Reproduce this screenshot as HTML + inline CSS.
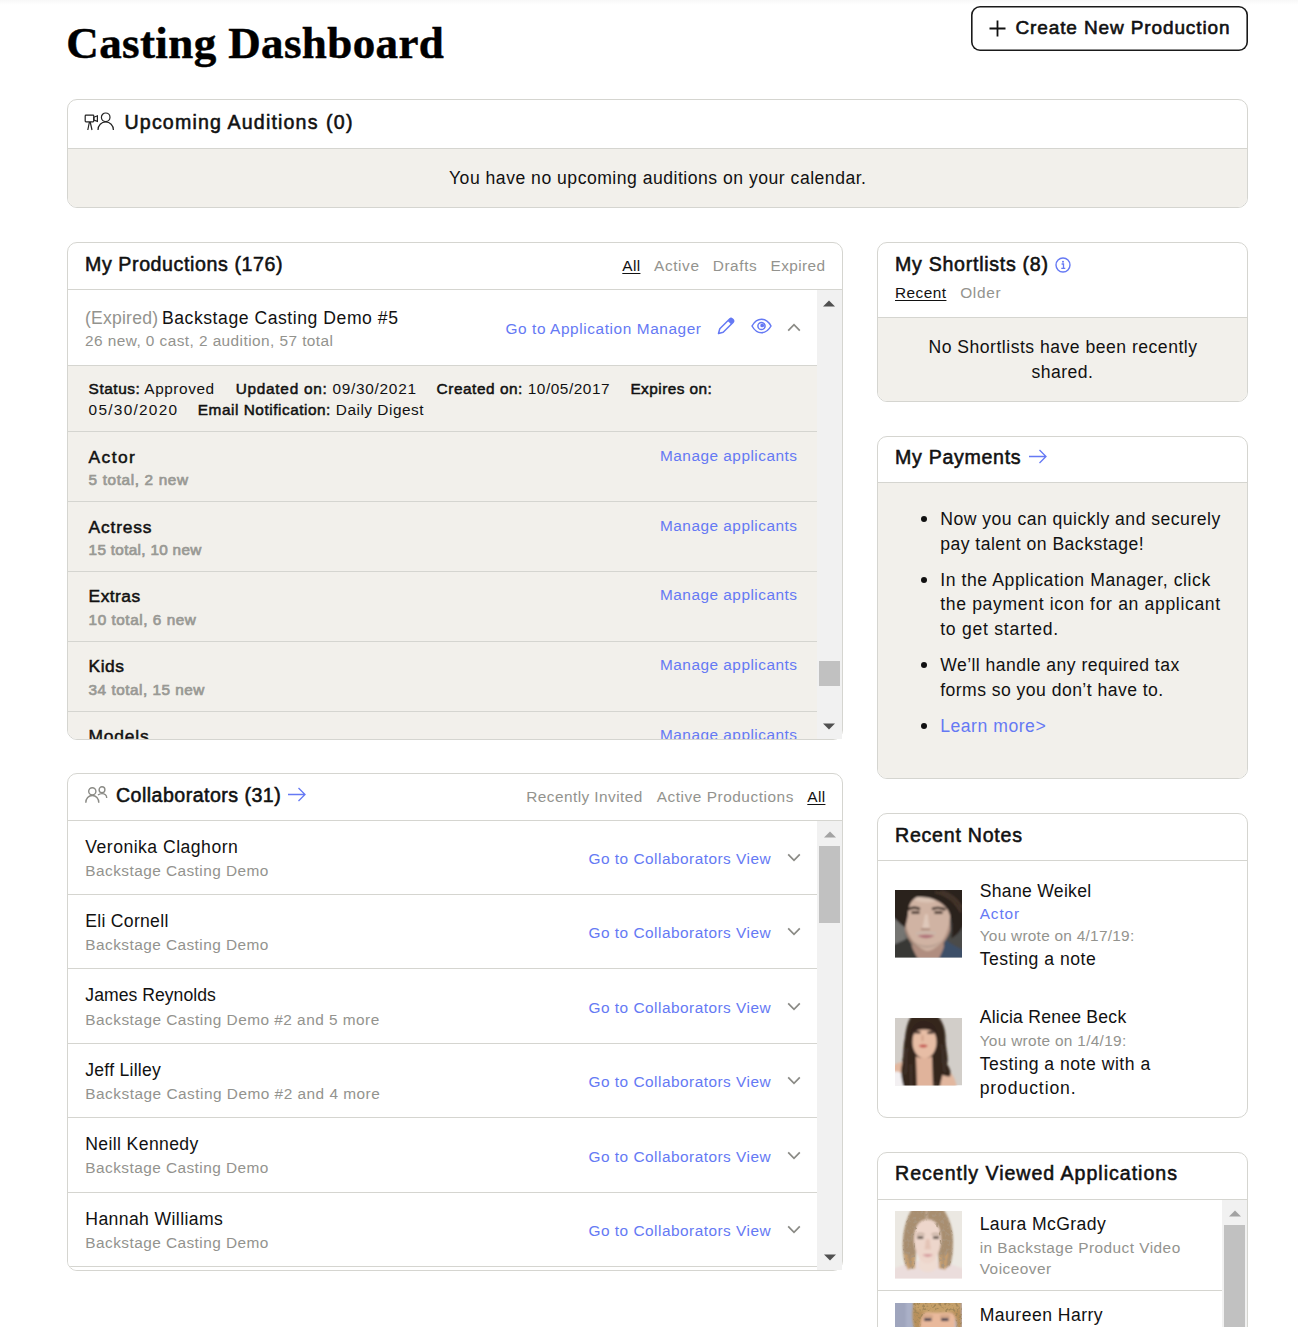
<!DOCTYPE html>
<html lang="en"><head><meta charset="utf-8"><title>Casting Dashboard</title>
<style>
*{box-sizing:border-box}
html,body{margin:0;padding:0;background:#fff}
body{width:1298px;height:1327px;overflow:hidden;position:relative;font-family:"Liberation Sans",sans-serif;color:#111111}
.b{position:absolute}
.t{position:absolute;white-space:nowrap;line-height:1}
.i{position:absolute;display:block;overflow:visible}
.strip{background:linear-gradient(#f8f8f8,#fff)}
.card{border:1px solid #d5d5d0;border-radius:10px;background:#fff}
.btn{box-shadow:inset 0 0 0 1.6px #1a1a1a;border-radius:9px;background:#fff}
.bd{background:#f2f0eb}
.ln{background:#d5d5d0}
.sb{background:#f1f1f1}
.thumb{background:#c1c1c1}
.dot{position:absolute;width:6px;height:6px;border-radius:50%;background:#111}
b{font-weight:400;-webkit-text-stroke:0.5px}
</style></head>
<body>
<div class="b root" style="left:0.00px;top:0.00px;width:1298.00px;height:1327.00px;"><div class="b strip" style="left:0.00px;top:0.00px;width:1298.00px;height:5.00px;"></div>
<span class="t" style="left:66.30px;top:21.01px;font-size:45px;color:#000;font-weight:700;font-family:'Liberation Serif',serif;letter-spacing:0.385px;-webkit-text-stroke:0.5px;">Casting Dashboard</span><div class="b btn" style="left:971.00px;top:6.00px;width:277.00px;height:45.40px;"><svg class="i" style="left:18.00px;top:13.50px" width="17" height="17" viewBox="0 0 17 17" ><path d="M8.5 0.5v16M0.5 8.5h16" stroke="#111" stroke-width="1.8" fill="none"/></svg><span class="t" style="left:44.50px;top:12.00px;font-size:19px;color:#111111;letter-spacing:0.878px;-webkit-text-stroke:0.6px;">Create New Production</span></div>
<div class="b card" style="left:67.00px;top:99.00px;width:1181.00px;height:109.00px;"><div class="b hd" style="left:0.00px;top:0.00px;width:1179.00px;height:48.00px;"></div>
<div class="b bd" style="left:0.00px;top:48.00px;width:1179.00px;height:59.00px;border-top:1px solid #d5d5d0;border-radius:0 0 9px 9px;"></div>
<svg class="i" style="left:16.00px;top:12.00px" width="31" height="19" viewBox="0 0 31 19" ><g fill="none" stroke="#222" stroke-width="1.2">
<rect x="1.2" y="3.2" width="8.6" height="6.6" rx="0.8"/><path d="M9.8 5.2l3.6-1.4v5.6l-3.6-1.4z"/><path d="M5.400 10l-1.600 8M6.200 10l1.800 8"/>
<circle cx="21.7" cy="5.3" r="4.3"/><path d="M14 18c0-4.6 3.4-8 7.7-8s7.7 3.400 7.700 8"/></g></svg><span class="t" style="left:56.50px;top:13.00px;font-size:19.6px;color:#111111;letter-spacing:1.165px;-webkit-text-stroke:0.55px;">Upcoming Auditions</span><span class="t" style="left:258.00px;top:13.00px;font-size:19.6px;color:#111111;letter-spacing:1.273px;-webkit-text-stroke:0.55px;">(0)</span><span class="t" style="left:381.00px;top:70.00px;font-size:17.6px;color:#111111;letter-spacing:0.499px;">You have no upcoming auditions on your calendar.</span></div>
<div class="b card" style="left:67.00px;top:242.00px;width:776.00px;height:498.00px;"><span class="t" style="left:17.00px;top:12.00px;font-size:19.6px;color:#111111;letter-spacing:0.594px;-webkit-text-stroke:0.55px;">My Productions (176)</span><span class="t" style="left:554.30px;top:15.01px;font-size:15.4px;color:#111111;letter-spacing:0.345px;text-decoration:underline;text-underline-offset:1.5px;text-decoration-thickness:1px;">All</span><span class="t" style="left:586.00px;top:15.01px;font-size:15.4px;color:#93938e;letter-spacing:0.616px;">Active</span><span class="t" style="left:644.70px;top:15.01px;font-size:15.4px;color:#93938e;letter-spacing:0.591px;">Drafts</span><span class="t" style="left:702.60px;top:15.01px;font-size:15.4px;color:#93938e;letter-spacing:0.385px;">Expired</span><div class="b ln" style="left:0.00px;top:46.00px;width:774.00px;height:1.00px;"></div>
<div class="b scroll" style="left:0.00px;top:47.00px;width:749.00px;height:449.00px;overflow:hidden;border-radius:0 0 0 9px;background:#f2f0eb;"><div class="b row" style="left:0.00px;top:0.00px;width:749.00px;height:75.00px;background:#fff;"><span class="t" style="left:17.00px;top:20.01px;font-size:17.6px;color:#93938e;letter-spacing:0.203px;">(Expired)</span><span class="t" style="left:94.00px;top:20.01px;font-size:17.6px;color:#111111;letter-spacing:0.542px;">Backstage Casting Demo #5</span><span class="t" style="left:17.00px;top:43.00px;font-size:15.4px;color:#93938e;letter-spacing:0.436px;">26 new, 0 cast, 2 audition, 57 total</span><span class="t" style="left:437.50px;top:31.00px;font-size:15.4px;color:#6579f4;letter-spacing:0.588px;">Go to Application Manager</span><svg class="i" style="left:649.00px;top:27.00px" width="19" height="18" viewBox="0 0 19 18" ><g fill="none" stroke="#6579f4" stroke-width="1.5" stroke-linejoin="round"><path d="M1.500 16.500l1.300-4.700L12.600 2a2 2 0 0 1 2.800 0l.6.600a2 2 0 0 1 0 2.800L6.200 15.200z"/></g><path d="M10.700 3.900l1.900-1.900a2 2 0 0 1 2.800 0l.6.600a2 2 0 0 1 0 2.800l-1.900 1.900z" fill="#6579f4"/></svg><svg class="i" style="left:683.00px;top:28.00px" width="21" height="16" viewBox="0 0 21 16" ><g fill="none" stroke="#6579f4" stroke-width="1.5"><path d="M1 8C3.500 3.500 7 1.300 10.500 1.300S17.500 3.500 20 8c-2.500 4.500-6 6.700-9.500 6.700S3.500 12.500 1 8z"/><circle cx="10.500" cy="8" r="3.600"/></g><circle cx="11.200" cy="7.400" r="1.900" fill="#6579f4"/></svg><svg class="i" style="left:719.00px;top:32.00px" width="14" height="10" viewBox="0 0 14 10" ><path d="M1.200 8.600L7 2.600l5.800 6" fill="none" stroke="#8a8a85" stroke-width="1.7"/></svg></div>
<div class="b ln" style="left:0.00px;top:75.00px;width:749.00px;height:1.00px;"></div>
<span class="t" style="left:20.60px;top:91.01px;font-size:15.4px;color:#111111;letter-spacing:0.551px;"><b>Status:</b> Approved</span><span class="t" style="left:167.70px;top:91.01px;font-size:15.4px;color:#111111;letter-spacing:0.720px;"><b>Updated on:</b> 09/30/2021</span><span class="t" style="left:368.60px;top:91.01px;font-size:15.4px;color:#111111;letter-spacing:0.536px;"><b>Created on:</b> 10/05/2017</span><span class="t" style="left:562.40px;top:91.01px;font-size:15.4px;color:#111111;letter-spacing:0.450px;"><b>Expires on:</b></span><span class="t" style="left:20.60px;top:112.01px;font-size:15.4px;color:#111111;letter-spacing:1.274px;">05/30/2020</span><span class="t" style="left:129.80px;top:112.01px;font-size:15.4px;color:#111111;letter-spacing:0.524px;"><b>Email Notification:</b> Daily Digest</span><div class="b ln" style="left:0.00px;top:141.00px;width:749.00px;height:1.00px;"></div>
<span class="t" style="left:20.60px;top:159.01px;font-size:17.4px;color:#111111;letter-spacing:1.427px;-webkit-text-stroke:0.5px;">Actor</span><span class="t" style="left:20.60px;top:182.00px;font-size:15.3px;color:#999994;letter-spacing:0.646px;-webkit-text-stroke:0.7px;">5 total, 2 new</span><span class="t" style="left:592.00px;top:158.01px;font-size:15.4px;color:#6579f4;letter-spacing:0.487px;">Manage applicants</span><div class="b ln" style="left:0.00px;top:211.00px;width:749.00px;height:1.00px;"></div>
<span class="t" style="left:20.60px;top:229.01px;font-size:17.4px;color:#111111;letter-spacing:0.803px;-webkit-text-stroke:0.5px;">Actress</span><span class="t" style="left:20.60px;top:252.00px;font-size:15.3px;color:#999994;letter-spacing:0.312px;-webkit-text-stroke:0.7px;">15 total, 10 new</span><span class="t" style="left:592.00px;top:228.01px;font-size:15.4px;color:#6579f4;letter-spacing:0.487px;">Manage applicants</span><div class="b ln" style="left:0.00px;top:281.00px;width:749.00px;height:1.00px;"></div>
<span class="t" style="left:20.60px;top:298.01px;font-size:17.4px;color:#111111;letter-spacing:0.441px;-webkit-text-stroke:0.5px;">Extras</span><span class="t" style="left:20.60px;top:322.00px;font-size:15.3px;color:#999994;letter-spacing:0.550px;-webkit-text-stroke:0.7px;">10 total, 6 new</span><span class="t" style="left:592.00px;top:297.01px;font-size:15.4px;color:#6579f4;letter-spacing:0.487px;">Manage applicants</span><div class="b ln" style="left:0.00px;top:351.00px;width:749.00px;height:1.00px;"></div>
<span class="t" style="left:20.60px;top:368.01px;font-size:17.4px;color:#111111;letter-spacing:0.485px;-webkit-text-stroke:0.5px;">Kids</span><span class="t" style="left:20.60px;top:392.00px;font-size:15.3px;color:#999994;letter-spacing:0.519px;-webkit-text-stroke:0.7px;">34 total, 15 new</span><span class="t" style="left:592.00px;top:367.01px;font-size:15.4px;color:#6579f4;letter-spacing:0.487px;">Manage applicants</span><div class="b ln" style="left:0.00px;top:421.00px;width:749.00px;height:1.00px;"></div>
<span class="t" style="left:20.60px;top:438.01px;font-size:17.4px;color:#111111;letter-spacing:0.787px;-webkit-text-stroke:0.5px;">Models</span><span class="t" style="left:20.60px;top:462.00px;font-size:15.3px;color:#999994;letter-spacing:0.393px;-webkit-text-stroke:0.7px;">12 total, 3 new</span><span class="t" style="left:592.00px;top:437.01px;font-size:15.4px;color:#6579f4;letter-spacing:0.487px;">Manage applicants</span></div>
<div class="b sb" style="left:749.00px;top:47.00px;width:25.00px;height:449.00px;"><svg class="i" style="left:6.20px;top:9.50px" width="12" height="7" viewBox="0 0 12 7" ><path d="M0 6.500L6 0.500l6 6z" fill="#505050"/></svg><div class="b thumb" style="left:2.00px;top:371.00px;width:21.00px;height:25.00px;"></div>
<svg class="i" style="left:6.20px;top:432.50px" width="12" height="7" viewBox="0 0 12 7" ><path d="M0 0.500L6 6.500l6-6z" fill="#505050"/></svg></div>
</div>
<div class="b card" style="left:67.00px;top:773.00px;width:776.00px;height:498.00px;"><svg class="i" style="left:17.00px;top:11.50px" width="23" height="18" viewBox="0 0 23 18" ><g fill="none" stroke="#8a8a85" stroke-width="1.4"><circle cx="7.300" cy="5.300" r="3.600"/><path d="M0.800 16.800c0-4.200 2.800-7.300 6.500-7.300s6.500 3.100 6.500 7.300"/><circle cx="17" cy="3.700" r="2.900"/><path d="M13 9c1.100-.900 2.400-1.400 4-1.400 2.700 0 4.700 1.800 4.700 4.300"/></g></svg><span class="t" style="left:48.00px;top:12.00px;font-size:19.6px;color:#111111;letter-spacing:0.463px;-webkit-text-stroke:0.55px;">Collaborators (31)</span><svg class="i" style="left:219.00px;top:13.00px" width="20" height="15" viewBox="0 0 20 15" ><path d="M1 7.500h17M11.500 1l6.500 6.500-6.500 6.500" fill="none" stroke="#6579f4" stroke-width="1.3"/></svg><span class="t" style="left:458.30px;top:15.01px;font-size:15.4px;color:#93938e;letter-spacing:0.432px;">Recently Invited</span><span class="t" style="left:588.70px;top:15.01px;font-size:15.4px;color:#93938e;letter-spacing:0.543px;">Active Productions</span><span class="t" style="left:739.30px;top:15.01px;font-size:15.4px;color:#111111;letter-spacing:0.345px;text-decoration:underline;text-underline-offset:1.5px;text-decoration-thickness:1px;">All</span><div class="b ln" style="left:0.00px;top:46.00px;width:774.00px;height:1.00px;"></div>
<div class="b scroll" style="left:0.00px;top:47.00px;width:749.00px;height:449.00px;overflow:hidden;border-radius:0 0 0 9px;background:#fff;"><span class="t" style="left:17.30px;top:18.01px;font-size:17.6px;color:#111111;letter-spacing:0.483px;">Veronika Claghorn</span><span class="t" style="left:17.30px;top:42.01px;font-size:15.4px;color:#93938e;letter-spacing:0.445px;">Backstage Casting Demo</span><span class="t" style="left:520.60px;top:30.01px;font-size:15.4px;color:#6579f4;letter-spacing:0.486px;">Go to Collaborators View</span><svg class="i" style="left:719.00px;top:32.00px" width="14" height="10" viewBox="0 0 14 10" ><path d="M1.200 1.400L7 7.400l5.800-6" fill="none" stroke="#8a8a85" stroke-width="1.700"/></svg><div class="b ln" style="left:0.00px;top:73.00px;width:749.00px;height:1.00px;"></div>
<span class="t" style="left:17.30px;top:92.01px;font-size:17.6px;color:#111111;letter-spacing:0.281px;">Eli Cornell</span><span class="t" style="left:17.30px;top:116.01px;font-size:15.4px;color:#93938e;letter-spacing:0.445px;">Backstage Casting Demo</span><span class="t" style="left:520.60px;top:104.00px;font-size:15.4px;color:#6579f4;letter-spacing:0.486px;">Go to Collaborators View</span><svg class="i" style="left:719.00px;top:106.40px" width="14" height="10" viewBox="0 0 14 10" ><path d="M1.200 1.400L7 7.400l5.800-6" fill="none" stroke="#8a8a85" stroke-width="1.700"/></svg><div class="b ln" style="left:0.00px;top:147.00px;width:749.00px;height:1.00px;"></div>
<span class="t" style="left:17.30px;top:166.00px;font-size:17.6px;color:#111111;letter-spacing:0.034px;">James Reynolds</span><span class="t" style="left:17.30px;top:191.02px;font-size:15.4px;color:#93938e;letter-spacing:0.480px;">Backstage Casting Demo #2 and 5 more</span><span class="t" style="left:520.60px;top:179.01px;font-size:15.4px;color:#6579f4;letter-spacing:0.486px;">Go to Collaborators View</span><svg class="i" style="left:719.00px;top:180.80px" width="14" height="10" viewBox="0 0 14 10" ><path d="M1.200 1.400L7 7.400l5.800-6" fill="none" stroke="#8a8a85" stroke-width="1.700"/></svg><div class="b ln" style="left:0.00px;top:222.00px;width:749.00px;height:1.00px;"></div>
<span class="t" style="left:17.30px;top:241.01px;font-size:17.6px;color:#111111;letter-spacing:0.247px;">Jeff Lilley</span><span class="t" style="left:17.30px;top:265.01px;font-size:15.4px;color:#93938e;letter-spacing:0.495px;">Backstage Casting Demo #2 and 4 more</span><span class="t" style="left:520.60px;top:253.01px;font-size:15.4px;color:#6579f4;letter-spacing:0.486px;">Go to Collaborators View</span><svg class="i" style="left:719.00px;top:255.20px" width="14" height="10" viewBox="0 0 14 10" ><path d="M1.200 1.400L7 7.400l5.800-6" fill="none" stroke="#8a8a85" stroke-width="1.700"/></svg><div class="b ln" style="left:0.00px;top:296.00px;width:749.00px;height:1.00px;"></div>
<span class="t" style="left:17.30px;top:315.00px;font-size:17.6px;color:#111111;letter-spacing:0.370px;">Neill Kennedy</span><span class="t" style="left:17.30px;top:339.00px;font-size:15.4px;color:#93938e;letter-spacing:0.445px;">Backstage Casting Demo</span><span class="t" style="left:520.60px;top:328.02px;font-size:15.4px;color:#6579f4;letter-spacing:0.486px;">Go to Collaborators View</span><svg class="i" style="left:719.00px;top:329.60px" width="14" height="10" viewBox="0 0 14 10" ><path d="M1.200 1.400L7 7.400l5.800-6" fill="none" stroke="#8a8a85" stroke-width="1.700"/></svg><div class="b ln" style="left:0.00px;top:371.00px;width:749.00px;height:1.00px;"></div>
<span class="t" style="left:17.30px;top:390.01px;font-size:17.6px;color:#111111;letter-spacing:0.393px;">Hannah Williams</span><span class="t" style="left:17.30px;top:414.01px;font-size:15.4px;color:#93938e;letter-spacing:0.445px;">Backstage Casting Demo</span><span class="t" style="left:520.60px;top:402.01px;font-size:15.4px;color:#6579f4;letter-spacing:0.486px;">Go to Collaborators View</span><svg class="i" style="left:719.00px;top:404.00px" width="14" height="10" viewBox="0 0 14 10" ><path d="M1.200 1.400L7 7.400l5.800-6" fill="none" stroke="#8a8a85" stroke-width="1.700"/></svg><div class="b ln" style="left:0.00px;top:445.00px;width:749.00px;height:1.00px;"></div>
</div>
<div class="b sb" style="left:749.00px;top:47.00px;width:25.00px;height:449.00px;"><svg class="i" style="left:6.50px;top:9.50px" width="12" height="7" viewBox="0 0 12 7" ><path d="M0 6.500L6 0.500l6 6z" fill="#a3a3a3"/></svg><div class="b thumb" style="left:2.00px;top:25.00px;width:21.00px;height:77.00px;"></div>
<svg class="i" style="left:6.50px;top:432.50px" width="12" height="7" viewBox="0 0 12 7" ><path d="M0 0.500L6 6.500l6-6z" fill="#505050"/></svg></div>
</div>
<div class="b card" style="left:877.00px;top:242.00px;width:371.00px;height:160.00px;"><span class="t" style="left:17.00px;top:12.00px;font-size:19.6px;color:#111111;letter-spacing:0.717px;-webkit-text-stroke:0.55px;">My Shortlists (8)</span><svg class="i" style="left:176.60px;top:14.40px" width="16" height="16" viewBox="0 0 16 16" ><circle cx="8" cy="8" r="7" fill="none" stroke="#6579f4" stroke-width="1.400"/><path d="M6.600 7h1.900v4.200M6.300 11.300h4" stroke="#6579f4" stroke-width="1.300" fill="none"/><circle cx="8" cy="4.700" r="1" fill="#6579f4"/></svg><span class="t" style="left:17.00px;top:42.01px;font-size:15.4px;color:#111111;letter-spacing:0.447px;text-decoration:underline;text-underline-offset:1.5px;text-decoration-thickness:1px;">Recent</span><span class="t" style="left:82.20px;top:42.01px;font-size:15.4px;color:#93938e;letter-spacing:0.715px;">Older</span><div class="b bd" style="left:0.00px;top:74.00px;width:369.00px;height:84.00px;border-top:1px solid #d5d5d0;border-radius:0 0 9px 9px;"></div>
<span class="t" style="left:50.50px;top:96.00px;font-size:17.6px;color:#111111;letter-spacing:0.490px;">No Shortlists have been recently</span><span class="t" style="left:153.50px;top:121.01px;font-size:17.6px;color:#111111;letter-spacing:0.469px;">shared.</span></div>
<div class="b card" style="left:877.00px;top:436.00px;width:371.00px;height:343.00px;"><span class="t" style="left:17.00px;top:11.00px;font-size:19.6px;color:#111111;letter-spacing:0.691px;-webkit-text-stroke:0.55px;">My Payments</span><svg class="i" style="left:150.00px;top:12.00px" width="20" height="15" viewBox="0 0 20 15" ><path d="M1 7.500h17M11.500 1l6.500 6.500-6.500 6.500" fill="none" stroke="#6579f4" stroke-width="1.300"/></svg><div class="b bd" style="left:0.00px;top:45.00px;width:369.00px;height:296.00px;border-top:1px solid #d5d5d0;border-radius:0 0 9px 9px;"></div>
<span class="t" style="left:62.20px;top:74.00px;font-size:17.6px;color:#111111;letter-spacing:0.483px;">Now you can quickly and securely</span><i class="dot" style="left:43.30px;top:78.90px"></i><span class="t" style="left:62.20px;top:99.01px;font-size:17.6px;color:#111111;letter-spacing:0.470px;">pay talent on Backstage!</span><span class="t" style="left:62.20px;top:135.01px;font-size:17.6px;color:#111111;letter-spacing:0.583px;">In the Application Manager, click</span><i class="dot" style="left:43.30px;top:139.60px"></i><span class="t" style="left:62.20px;top:159.01px;font-size:17.6px;color:#111111;letter-spacing:0.650px;">the payment icon for an applicant</span><span class="t" style="left:62.20px;top:184.01px;font-size:17.6px;color:#111111;letter-spacing:0.743px;">to get started.</span><span class="t" style="left:62.20px;top:220.00px;font-size:17.6px;color:#111111;letter-spacing:0.444px;">We’ll handle any required tax</span><i class="dot" style="left:43.30px;top:224.70px"></i><span class="t" style="left:62.20px;top:245.01px;font-size:17.6px;color:#111111;letter-spacing:0.452px;">forms so you don’t have to.</span><span class="t" style="left:62.20px;top:281.01px;font-size:17.6px;color:#6579f4;letter-spacing:0.525px;">Learn more&gt;</span><i class="dot" style="left:43.30px;top:286.00px"></i></div>
<div class="b card" style="left:877.00px;top:813.00px;width:371.00px;height:305.00px;"><span class="t" style="left:17.00px;top:12.00px;font-size:19.6px;color:#111111;letter-spacing:0.753px;-webkit-text-stroke:0.55px;">Recent Notes</span><div class="b ln" style="left:0.00px;top:46.00px;width:369.00px;height:1.00px;"></div>
<span class="t" style="left:101.70px;top:69.00px;font-size:17.6px;color:#111111;letter-spacing:0.297px;">Shane Weikel</span><span class="t" style="left:101.70px;top:92.01px;font-size:15.4px;color:#6579f4;letter-spacing:0.895px;">Actor</span><span class="t" style="left:101.70px;top:114.01px;font-size:15.4px;color:#93938e;letter-spacing:0.266px;">You wrote on 4/17/19:</span><span class="t" style="left:101.70px;top:137.01px;font-size:17.6px;color:#111111;letter-spacing:0.495px;">Testing a note</span><span class="t" style="left:101.70px;top:195.01px;font-size:17.6px;color:#111111;letter-spacing:0.232px;">Alicia Renee Beck</span><span class="t" style="left:101.70px;top:219.02px;font-size:15.4px;color:#93938e;letter-spacing:0.309px;">You wrote on 1/4/19:</span><span class="t" style="left:101.70px;top:242.01px;font-size:17.6px;color:#111111;letter-spacing:0.505px;">Testing a note with a</span><span class="t" style="left:101.70px;top:266.01px;font-size:17.6px;color:#111111;letter-spacing:0.894px;">production.</span><svg class="i" style="left:17.00px;top:76.30px" width="67" height="67.5" viewBox="0 0 67 67" preserveAspectRatio="none"><defs><filter id="bl1" x="-15%" y="-15%" width="130%" height="130%"><feGaussianBlur stdDeviation="0.8"/></filter><clipPath id="cp1"><rect width="67" height="67"/></clipPath></defs>
<g clip-path="url(#cp1)"><rect width="67" height="67" fill="#676764"/><g filter="url(#bl1)">
<rect x="46" y="-3" width="25" height="73" fill="#4b4b49"/>
<rect x="-3" y="26" width="13" height="30" fill="#757572"/>
<path d="M18 45L48 45L50 70L16 70z" fill="#b08e80"/>
<path d="M-3 55C4 52 10 50 14 47C16 56 20 64 24 70L-3 70z" fill="#383836"/>
<path d="M50 49C56 54 64 58 70 60L70 70L43 70C47 62 50 56 50 49z" fill="#3e4f68"/>
<path d="M9.500 22C9 10 18 4 32 4C46 4 55 10 55 24C55 34 54 42 50 48C44 56 38 60.500 32 60.500C26 60.500 18 54 14 48C10 42 9.500 32 9.500 22z" fill="#d0b3a3"/>
<path d="M16 8C24 5 36 5 44 8C40 14 24 14 16 8z" fill="#dcc4b5"/>
<path d="M10 28C11 44 18 55 31 60.500C20 59 12 50 10 40z" fill="#a58778"/>
<path d="M55 28C53 44 47 54 36 60C47 57 53 48 55 40z" fill="#b29384"/>
<path d="M18 50C24 57 40 57 46 50C42 60 22 60 18 50z" fill="#b9a092"/>
<path d="M-3 -3H70V30C67 40 62 45 56 48C58 38 57 28 53 20C46 10 34 6 22 7C16 10 13 16 13 24C12 30 11 34 10 37C4 33 0 28-3 26z" fill="#2a201b"/>
<path d="M40 2C50 4 60 10 66 22M46 1C56 4 63 10 67 18" stroke="#4d3c31" stroke-width="1.800" fill="none"/>
<path d="M12.500 19.500C16 17.300 21 17.300 25 19M37 19C41 17.300 46 17.300 50.500 19.500" stroke="#2e211b" stroke-width="2.300" fill="none"/>
<path d="M16.500 22.300h8M39.500 22.300h8" stroke="#3a2b24" stroke-width="2.400"/>
<path d="M30 24C29 30 28 36 27 38L35 39C34 34 33 30 33 24z" fill="#dfc8ba"/>
<path d="M26 39h9" stroke="#9a7668" stroke-width="1.500"/>
<path d="M21 43.300C27 41.800 35 41.800 41 43.300" stroke="#c9b8ad" stroke-width="1.600" fill="none"/>
<path d="M22.500 45.500C28 44.200 34 44.200 39.500 45.500C34 48.800 28 48.800 22.500 45.500z" fill="#ae6f78"/>
</g></g></svg><svg class="i" style="left:17.00px;top:204.30px" width="67" height="67.5" viewBox="0 0 67 67" preserveAspectRatio="none"><defs><filter id="bl2" x="-15%" y="-15%" width="130%" height="130%"><feGaussianBlur stdDeviation="0.8"/></filter><clipPath id="cp2"><rect width="67" height="67"/></clipPath></defs>
<g clip-path="url(#cp2)"><rect width="67" height="67" fill="#d2cec9"/><g filter="url(#bl2)">
<path d="M-3 48C2 44 8 43 12 44L40 50C52 50 60 54 62 70L-3 70z" fill="#e2b79f"/>
<path d="M-3 54C2 52 6 54 9 58L10 70L-3 70z" fill="#f3f0f2"/>
<path d="M21 36h16v34H21z" fill="#dfb199"/>
<path d="M17 -3H42C48 4 51 12 50.500 22C51 32 54 40 52 46C56 52 56 56 55 58C50 58 46 56 44 54C42 60 40 66 39 70H9C7 62 5 54 7 46C9 36 8 28 10 20C11 10 13 3 17 -3z" fill="#35271f"/>
<path d="M17.500 24C17.500 14 22 9 29 9C36 9 41.500 14 41.500 24C41.500 33 36 40 29.500 40C23 40 17.500 33 17.500 24z" fill="#e7bda5"/>
<path d="M21 38C24 40 34 40 37 38L38 70H22z" fill="#e0b39b"/>
<path d="M15 18C16 8 22 3 29 3C36 3 42 8 43 18C38 12.500 34 11.500 29 11.500C24 11.500 20 12.500 15 18z" fill="#30231d"/>
<path d="M10 40C12 50 12 60 14 70M48 40C47 50 44 58 42 70" stroke="#35271f" stroke-width="5" fill="none"/>
<path d="M12 30C10 38 12 46 10 56M46 26C50 34 47 44 50 54M16 46C15 54 17 60 16 68" stroke="#4a3a30" stroke-width="1.400" fill="none"/><path d="M19.500 14.300h6M32.500 14.600h6" stroke="#3a2a26" stroke-width="2.400"/>
<path d="M27.500 17v6" stroke="#d0a088" stroke-width="2"/>
<path d="M23.500 27.500C26.500 26 30 26 33 27.500C30 30 26.500 30 23.500 27.500z" fill="#c4534f"/>
</g></g></svg></div>
<div class="b card" style="left:877.00px;top:1152.00px;width:371.00px;height:320.00px;overflow:hidden;"><span class="t" style="left:17.00px;top:11.00px;font-size:19.6px;color:#111111;letter-spacing:0.977px;-webkit-text-stroke:0.55px;">Recently Viewed Applications</span><div class="b ln" style="left:0.00px;top:46.00px;width:369.00px;height:1.00px;"></div>
<svg class="i" style="left:17.00px;top:58.30px" width="67" height="67.5" viewBox="0 0 67 67" preserveAspectRatio="none"><defs><filter id="bl3" x="-15%" y="-15%" width="130%" height="130%"><feGaussianBlur stdDeviation="0.8"/></filter><clipPath id="cp3"><rect width="67" height="67"/></clipPath><filter id="nz3" x="0" y="0" width="100%" height="100%"><feTurbulence type="fractalNoise" baseFrequency="0.32" numOctaves="2" seed="3" result="n"/><feColorMatrix in="n" type="matrix" values="0 0 0 0 0.4 0 0 0 0 0.3 0 0 0 0 0.2 5 0 0 0 -2.55" result="d"/><feComposite in="d" in2="SourceGraphic" operator="in" result="m"/><feGaussianBlur in="m" stdDeviation="0.5"/></filter></defs>
<g clip-path="url(#cp3)"><rect width="67" height="67" fill="#ebe8e2"/><g filter="url(#bl3)">
<path d="M-3 58C6 54 14 52 22 50H44C52 52 60 54 70 58V70H-3z" fill="#ebdddc"/>
<path d="M24 46h18v10C38 62 28 62 24 56z" fill="#efdcd2"/>
<path d="M17.500 -3H47.500C54 6 58 18 58 30C58 40 57 48 55 54C50 58 46 58 44 56L43 40H21L20 56C17 58 13 57 10.500 54C8 46 7.500 36 8 28C9 16 12 6 17.500 -3z" fill="#a88e70"/>
<path d="M10.500 42C12 48 13 54 14 58M52 42C51 48 50 54 49 58M18 44C18 50 18 54 19 57M46 44C46 50 46 54 45 57" stroke="#c9a070" stroke-width="3" fill="none"/>
<path d="M19 28C19 16 24 8.500 32.500 8.500C41 8.500 46 16 46 28C46 40 40 52 32.500 52C25 52 19 40 19 28z" fill="#edd6cb"/>
<path d="M32 -3C31.500 2 31.500 6 32 9" stroke="#d6c0b0" stroke-width="1.200" fill="none"/>
<path d="M21.500 23.500C24 22 27 22 29.500 23.500M36.500 23.500C39 22 42 22 44.500 23.500" stroke="#a08a78" stroke-width="1" fill="none"/>
<path d="M22.300 26.300h6M38 26.300h6" stroke="#4a4036" stroke-width="2.600"/>
<path d="M31 28C30.500 33 30 36 29.500 38H36C35.500 36 35 33 34.500 28z" fill="#e3c3b5"/>
<path d="M27.500 43.500C30.500 42.300 35 42.300 38 43.500C35 46.300 30.500 46.300 27.500 43.500z" fill="#d69a9c"/>
</g><path d="M17.500 -3H47.500C54 6 58 18 58 30C58 40 57 48 55 54C50 58 46 58 44 56L45 36C45 20 42 10 32.500 9C23 10 20 20 20 36L20 56C17 58 13 57 10.500 54C8 46 7.500 36 8 28C9 16 12 6 17.500 -3z" fill="#000" filter="url(#nz3)"/></g></svg><span class="t" style="left:101.70px;top:63.00px;font-size:17.6px;color:#111111;letter-spacing:0.396px;">Laura McGrady</span><span class="t" style="left:101.70px;top:87.01px;font-size:15.4px;color:#93938e;letter-spacing:0.468px;">in Backstage Product Video</span><span class="t" style="left:101.70px;top:108.02px;font-size:15.4px;color:#93938e;letter-spacing:0.488px;">Voiceover</span><div class="b ln" style="left:0.00px;top:137.00px;width:344.00px;height:1.00px;"></div>
<svg class="i" style="left:17.00px;top:150.10px" width="67" height="67.5" viewBox="0 0 67 67" preserveAspectRatio="none"><defs><filter id="bl4" x="-15%" y="-15%" width="130%" height="130%"><feGaussianBlur stdDeviation="0.8"/></filter><clipPath id="cp4"><rect width="67" height="67"/></clipPath><filter id="nz4" x="0" y="0" width="100%" height="100%"><feTurbulence type="fractalNoise" baseFrequency="0.36" numOctaves="2" seed="7" result="n"/><feColorMatrix in="n" type="matrix" values="0 0 0 0 0.36 0 0 0 0 0.24 0 0 0 0 0.1 5 0 0 0 -2.55" result="d"/><feComposite in="d" in2="SourceGraphic" operator="in" result="m"/><feGaussianBlur in="m" stdDeviation="0.5"/></filter></defs>
<g clip-path="url(#cp4)"><rect width="67" height="67" fill="#aab0c7"/><g filter="url(#bl4)">
<rect x="-3" y="-3" width="14" height="73" fill="#9fa5bd"/>
<rect x="60" y="-3" width="10" height="73" fill="#b5b9cd"/>
<path d="M22 6C30 2 52 2 60 8V70H22z" fill="#e9b99c"/>
<path d="M18.500 -3H66.500L67 40C64 36 62 28 61 18C60 12 58 10 56 10C46 7 34 7 28 11C26 16 25 24 24 34C20 30 17 20 17.500 10z" fill="#b8905c"/>
<path d="M20 -3H66V6C58 9 50 10 42 10C34 10 28 9 20 7z" fill="#c5a06a"/>
<path d="M29 16.300h7.500M46 16.300h7.500" stroke="#2e3348" stroke-width="3"/>
<path d="M28 13.500C31 12.500 35 12.500 38 13.500M45 13.500C48 12.500 52 12.500 55 13.500" stroke="#b58a68" stroke-width="1" fill="none"/>
</g><path d="M18.500 -3H66.500L67 40C64 36 62 28 61 18C60 12 58 10 56 10C46 7 34 7 28 11C26 16 25 24 24 34C20 30 17 20 17.500 10z" fill="#000" filter="url(#nz4)"/></g></svg><span class="t" style="left:101.70px;top:154.00px;font-size:17.6px;color:#111111;letter-spacing:0.471px;">Maureen Harry</span><div class="b sb" style="left:344.00px;top:47.00px;width:25.00px;height:300.00px;"><svg class="i" style="left:6.50px;top:9.50px" width="12" height="7" viewBox="0 0 12 7" ><path d="M0 6.500L6 0.500l6 6z" fill="#a3a3a3"/></svg><div class="b thumb" style="left:2.00px;top:25.00px;width:21.00px;height:200.00px;"></div>
</div>
</div>
</div>
</body></html>
